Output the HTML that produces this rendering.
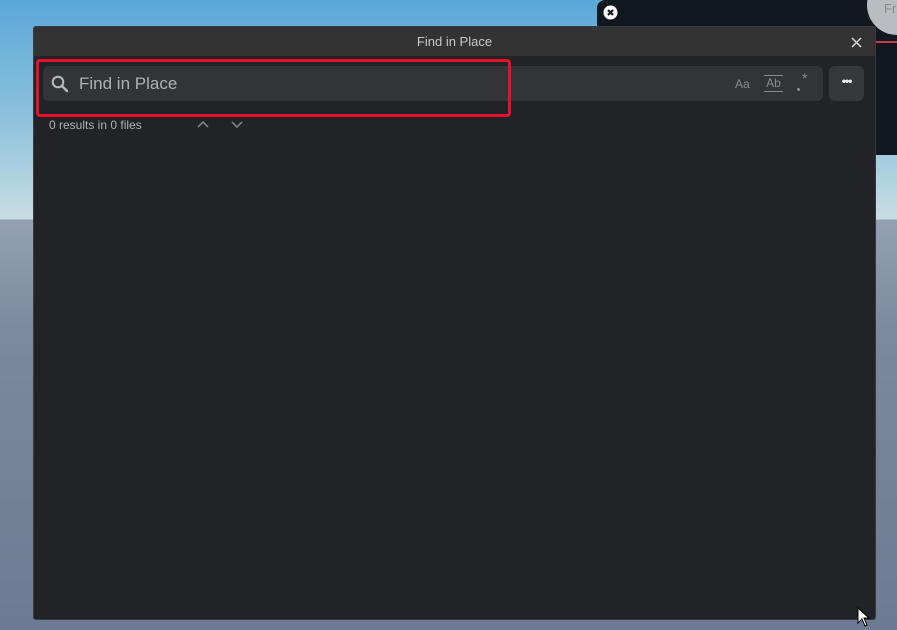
<!DOCTYPE html>
<html><head><style>
body{margin:0;width:897px;height:630px;overflow:hidden;position:relative;font-family:"Liberation Sans",sans-serif;
background:linear-gradient(#5aa8d9 0px,#8ec2dc 120px,#c9dde4 219px,#93a1b3 220px,#7c8aa0 330px,#6c7a93 630px);}
.abs{position:absolute}
</style></head><body>
<div class="abs" style="left:597px;top:0;width:300px;height:155px;background:#111820;border-top-left-radius:8px"></div>
<div class="abs" style="left:867px;top:-25px;width:60px;height:60px;border-radius:50%;background:#b9bdc1"></div>
<div class="abs" style="left:884px;top:1px;font-size:13px;color:#888">Fr</div>
<div class="abs" style="left:876px;top:41px;width:21px;height:2px;background:#d0354a"></div>
<svg class="abs" style="left:603px;top:5px" width="15" height="15" viewBox="0 0 15 15"><circle cx="7.5" cy="7.5" r="7" fill="#fff"/><path d="M5 5L10 10M10 5L5 10" stroke="#111820" stroke-width="2.2"/></svg>

<div class="abs" style="left:33px;top:26px;width:843px;height:594px;background:#222327;border:1px solid #3a3b3e;box-sizing:border-box;border-radius:3px;overflow:hidden">
  <div style="height:29px;background:#333334;color:#c8c8c8;font-size:13px;text-align:center;line-height:29px">Find in Place</div>
  <svg class="abs" style="left:817px;top:10px" width="11" height="11" viewBox="0 0 11 11"><path d="M1 1L10 10M10 1L1 10" stroke="#ddd" stroke-width="1.5"/></svg>
  <div class="abs" style="left:9px;top:39px;width:780px;height:35px;background:#333438;border-radius:6px"></div>
  <svg class="abs" style="left:17px;top:48px" width="18" height="18" viewBox="0 0 18 18"><circle cx="7" cy="7" r="5.3" fill="none" stroke="#b9b9b9" stroke-width="2"/><path d="M11 11L16 16" stroke="#b9b9b9" stroke-width="2.4" stroke-linecap="round"/></svg>
  <div class="abs" style="left:45px;top:47px;font-size:17px;color:#b0b0b0">Find in Place</div>
  <div class="abs" style="left:701px;top:50px;font-size:12px;color:#8a8a8a">Aa</div>
  <div class="abs" style="left:730px;top:48px;width:19px;border-top:1px solid #8a8a8a;border-bottom:1px solid #8a8a8a;font-size:12px;color:#8a8a8a;text-align:center;line-height:15px;height:15px">Ab</div>
  <div class="abs" style="left:763px;top:61px;width:3px;height:3px;background:#8a8a8a;border-radius:50%"></div>
  <div class="abs" style="left:768px;top:43px;font-size:14px;color:#8a8a8a">*</div>
  <div class="abs" style="left:795px;top:39px;width:35px;height:35px;background:#37383c;border-radius:6px;color:#eee;text-align:center;font-size:12px;line-height:31px;font-weight:bold;letter-spacing:-1px">•••</div>
  <div class="abs" style="left:15px;top:91px;font-size:12px;color:#b0b0b0">0 results in 0 files</div>
  <svg class="abs" style="left:162px;top:93px" width="14" height="9" viewBox="0 0 14 9"><path d="M2 7L7 2L12 7" fill="none" stroke="#888" stroke-width="1.5"/></svg>
  <svg class="abs" style="left:196px;top:93px" width="14" height="9" viewBox="0 0 14 9"><path d="M2 2L7 7L12 2" fill="none" stroke="#888" stroke-width="1.5"/></svg>
</div>
<div class="abs" style="left:36px;top:59px;width:475px;height:58px;border:3px solid #e8102a;border-radius:4px;box-sizing:border-box"></div>
<svg class="abs" style="left:857px;top:607px" width="14" height="20" viewBox="0 0 14 20"><path d="M1 1L1 16L5 12L8 19L10 18L7 11L12 11Z" fill="#fff" stroke="#000" stroke-width="1"/></svg>
</body></html>
